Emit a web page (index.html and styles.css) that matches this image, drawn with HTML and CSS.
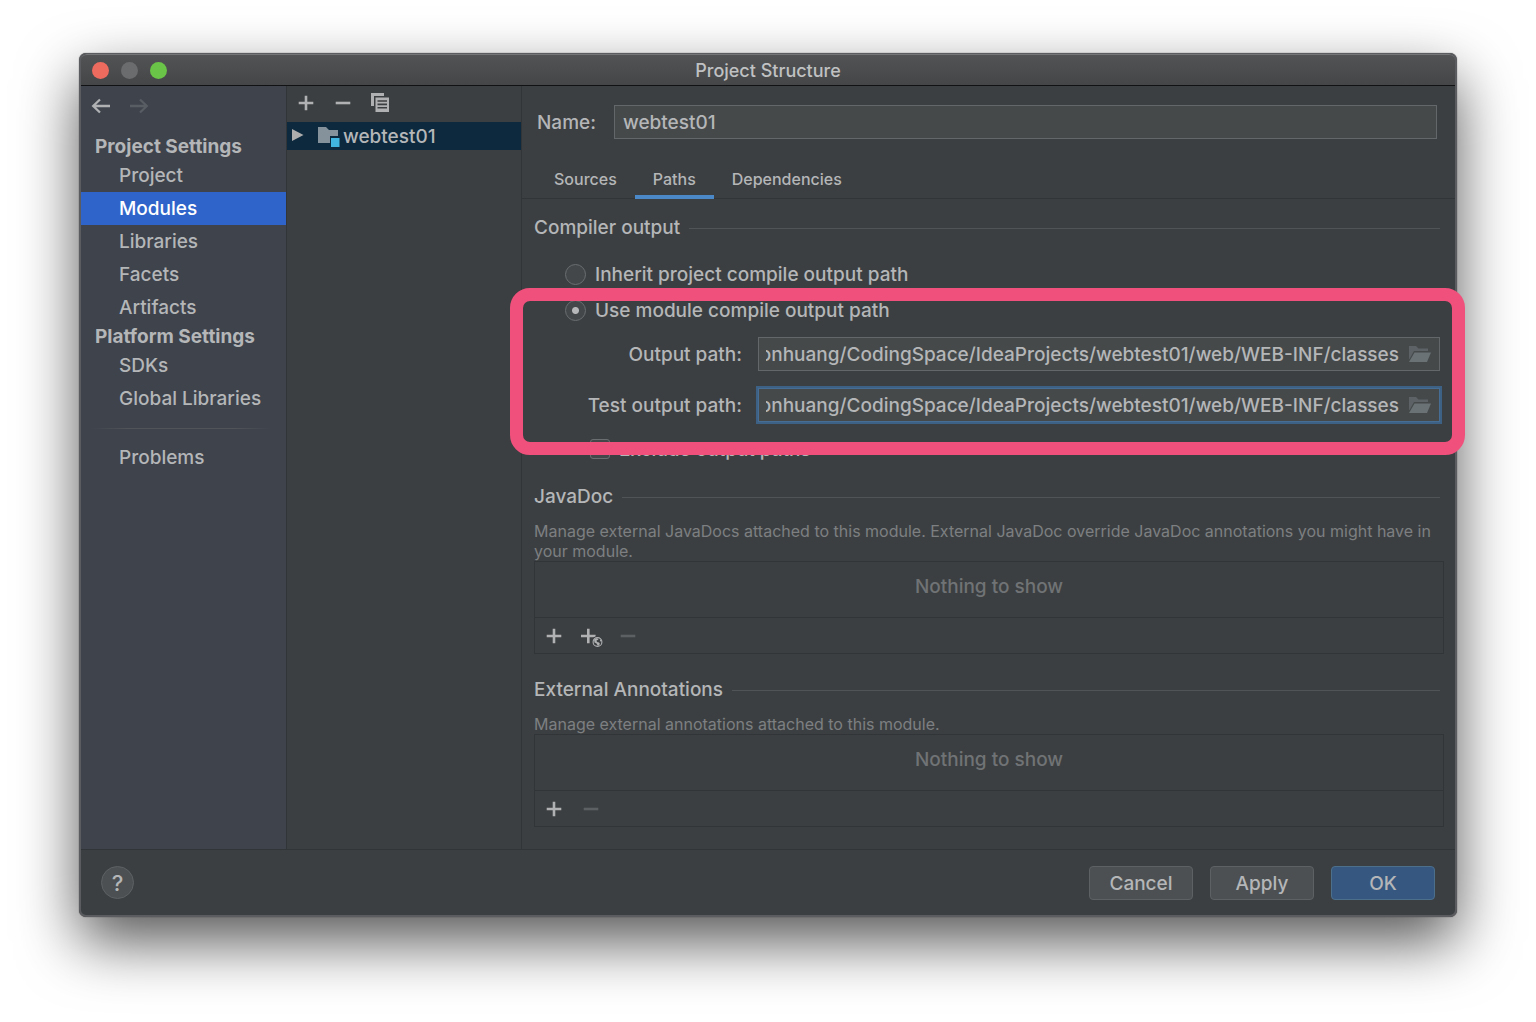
FILE: index.html
```html
<!DOCTYPE html>
<html lang="en">
<head>
<meta charset="utf-8">
<title>Project Structure</title>
<link rel="stylesheet" href="styles.css">
</head>
<body>
<div class="window">
  <header class="titlebar">
    <div class="lights">
      <span class="light light-close"></span>
      <span class="light light-min"></span>
      <span class="light light-zoom"></span>
    </div>
    <h1 class="title">Project Structure</h1>
  </header>

  <div class="body">
    <nav class="sidebar">
      <div class="history">
        <button class="icon-btn" type="button" aria-label="Back">
          <svg width="20" height="16" viewBox="0 0 20 16"><path d="M19 8H2M9 1.5 2.2 8 9 14.500" fill="none" stroke="#afb1b3" stroke-width="2.300"/></svg>
        </button>
        <button class="icon-btn" type="button" aria-label="Forward" disabled>
          <svg width="20" height="16" viewBox="0 0 20 16"><path d="M1 8h17M11 1.500 17.800 8 11 14.500" fill="none" stroke="#585c63" stroke-width="2.300"/></svg>
        </button>
      </div>
      <h2 class="nav-heading">Project Settings</h2>
      <a class="nav-item" href="#project">Project</a>
      <a class="nav-item selected" href="#modules">Modules</a>
      <a class="nav-item" href="#libraries">Libraries</a>
      <a class="nav-item" href="#facets">Facets</a>
      <a class="nav-item" href="#artifacts">Artifacts</a>
      <h2 class="nav-heading">Platform Settings</h2>
      <a class="nav-item" href="#sdks">SDKs</a>
      <a class="nav-item" href="#global">Global Libraries</a>
      <hr class="nav-rule">
      <a class="nav-item" href="#problems">Problems</a>
    </nav>

    <section class="modules">
      <div class="toolbar modules-toolbar">
        <button class="icon-btn" type="button" aria-label="Add">
          <svg width="16" height="16" viewBox="0 0 16 16"><path d="M8 .7v14.600M.7 8h14.600" stroke="#afb1b3" stroke-width="2.600"/></svg>
        </button>
        <button class="icon-btn" type="button" aria-label="Remove">
          <svg width="16" height="16" viewBox="0 0 16 16"><path d="M.7 8h14.600" stroke="#afb1b3" stroke-width="2.600"/></svg>
        </button>
        <button class="icon-btn" type="button" aria-label="Copy">
          <svg width="20" height="20" viewBox="0 0 20 20"><path d="M1 0h13v3H4v10H1z" fill="#afb1b3"/><path fill="#afb1b3" fill-rule="evenodd" d="M5.500 4.500H19V19H5.500zM7.500 7.200v1.600H17V7.200zm0 3.400v1.600H17v-1.600zm0 3.400v1.600H17V14z"/></svg>
        </button>
      </div>
      <a class="tree-row" href="#webtest01">
        <svg width="12" height="14" viewBox="0 0 12 14"><path d="M0 0v12l11.500-6z" fill="#adadad"/></svg>
        <svg class="module-icon" width="24" height="22" viewBox="0 0 24 22"><path d="M1 1h8l3 3h9v13H1z" fill="#85919b"/><path d="M13 10h10v12H13z" fill="#0d293e"/><path d="M14 12h8.500v9H14z" fill="#40b6e0"/></svg>
        <span>webtest01</span>
      </a>
    </section>

    <main class="editor">
      <div class="name-row">
        <label for="name">Name:</label>
        <input class="field name-field" id="name" type="text" value="webtest01">
      </div>
      <div class="tabs">
        <button class="tab" type="button">Sources</button>
        <button class="tab active" type="button">Paths</button>
        <button class="tab" type="button">Dependencies</button>
      </div>

      <div class="panel">
        <h3 class="section-title">Compiler output</h3>
        <label class="choice"><input class="radio" type="radio" name="output"><span>Inherit project compile output path</span></label>
        <div class="custom-output">
          <label class="choice"><input class="radio" type="radio" name="output" checked><span>Use module compile output path</span></label>
          <div class="path-row">
            <label for="out">Output path:</label>
            <div class="field path-field">
              <input class="path-input" id="out" type="text" value="onhuang/CodingSpace/IdeaProjects/webtest01/web/WEB-INF/classes">
              <button class="browse" type="button" aria-label="Browse output path">
                <svg width="22" height="16" viewBox="0 0 22 16"><path d="M0 0h7l2.500 2.500H19V5H5L.5 13H0z" fill="#5c6265"/><path d="M5.500 6.500H22L18 16H0z" fill="#6a7275"/></svg>
              </button>
            </div>
          </div>
          <div class="path-row">
            <label for="test">Test output path:</label>
            <div class="field path-field focused">
              <input class="path-input" id="test" type="text" value="onhuang/CodingSpace/IdeaProjects/webtest01/web/WEB-INF/classes">
              <button class="browse" type="button" aria-label="Browse test output path">
                <svg width="22" height="16" viewBox="0 0 22 16"><path d="M0 0h7l2.500 2.500H19V5H5L.5 13H0z" fill="#5c6265"/><path d="M5.500 6.500H22L18 16H0z" fill="#6a7275"/></svg>
              </button>
            </div>
          </div>
          <label class="choice exclude"><input class="check" type="checkbox"><span>Exclude output paths</span></label>
          <div class="highlight"></div>
        </div>

        <h3 class="section-title">JavaDoc</h3>
        <p class="hint">Manage external JavaDocs attached to this module. External JavaDoc override JavaDoc annotations you might have in your module.</p>
        <div class="list">
          <p class="empty">Nothing to show</p>
          <div class="toolbar list-toolbar">
            <button class="icon-btn" type="button" aria-label="Add JavaDoc">
              <svg width="16" height="16" viewBox="0 0 16 16"><path d="M8 .7v14.600M.7 8h14.600" stroke="#afb1b3" stroke-width="2.600"/></svg>
            </button>
            <button class="icon-btn" type="button" aria-label="Add JavaDoc URL">
              <svg width="24" height="24" viewBox="0 0 24 24"><path d="M9.300 4.700v14.600M2 12h14.600" stroke="#afb1b3" stroke-width="2.600"/><circle cx="18.500" cy="18" r="6" fill="#3c3f41"/><circle cx="18.500" cy="18" r="4.400" fill="none" stroke="#afb1b3" stroke-width="1.100"/><path d="M15 15.500l3-1.500 1.500 1.500-2 1 .5 1.500 2 .5 1 1.500-2 2-1.500-2.500-2-1zM21 15l1.500 2-1.500.5z" fill="#afb1b3"/></svg>
            </button>
            <button class="icon-btn" type="button" aria-label="Remove JavaDoc" disabled>
              <svg width="16" height="16" viewBox="0 0 16 16"><path d="M.7 8h14.600" stroke="#5d6062" stroke-width="2.600"/></svg>
            </button>
          </div>
        </div>

        <h3 class="section-title">External Annotations</h3>
        <p class="hint">Manage external annotations attached to this module.</p>
        <div class="list">
          <p class="empty">Nothing to show</p>
          <div class="toolbar list-toolbar">
            <button class="icon-btn" type="button" aria-label="Add annotations">
              <svg width="16" height="16" viewBox="0 0 16 16"><path d="M8 .7v14.600M.7 8h14.600" stroke="#afb1b3" stroke-width="2.600"/></svg>
            </button>
            <button class="icon-btn" type="button" aria-label="Remove annotations" disabled>
              <svg width="16" height="16" viewBox="0 0 16 16"><path d="M.7 8h14.600" stroke="#5d6062" stroke-width="2.600"/></svg>
            </button>
          </div>
        </div>
      </div>
    </main>
  </div>

  <footer class="footer">
    <button class="help" type="button" aria-label="Help">?</button>
    <div class="actions">
      <button class="btn" type="button">Cancel</button>
      <button class="btn" type="button">Apply</button>
      <button class="btn primary" type="button">OK</button>
    </div>
  </footer>
</div>
</body>
</html>
```
FILE: styles.css
```css
* { box-sizing: border-box; }

body {
  margin: 0;
  padding: 53px 79px 104px;
  background: #fff;
  color: #b4b6b8;
  font: 500 19px/24px Inter, "Liberation Sans", sans-serif;
}

h1, h2, h3, p { margin: 0; font-size: inherit; font-weight: inherit; }
a { color: inherit; text-decoration: none; }
button, input { font: inherit; color: inherit; }
svg { display: block; flex: none; }

.window {
  border: 2px solid #5a5c5f;
  border-top-width: 1px;
  border-radius: 7px;
  background: #3c3f41;
  box-shadow: 0 0 1px rgba(0, 0, 0, .8), 0 25px 60px rgba(0, 0, 0, .66);
}

/* Title bar */
.titlebar {
  display: grid;
  grid-template-columns: 1fr auto 1fr;
  align-items: center;
  height: 32px;
  padding: 0 11px;
  border-top: 1px solid #757678;
  border-bottom: 1px solid #111213;
  border-radius: 6px 6px 0 0;
  background: linear-gradient(#515355, #444648);
}
.lights { display: flex; gap: 12px; }
.light { width: 17px; height: 17px; border-radius: 50%; }
.light-close { background: #ed6a5f; }
.light-min { background: #6b6c6e; }
.light-zoom { background: #6ac447; }
.title { padding-top: 2px; color: #c0c1c2; font-size: 18px; }

.body { display: grid; grid-template-columns: 206px 235px 1fr; }

.icon-btn {
  display: flex;
  align-items: center;
  justify-content: center;
  width: 24px;
  height: 24px;
  padding: 0;
  border: 0;
  background: none;
}

/* Sidebar */
.sidebar { background: #3e434c; border-right: 1px solid #323538; }
.history { display: flex; gap: 14px; padding: 8px 8px 16px; }
.nav-heading { padding-left: 14px; line-height: 25px; font-weight: 700; }
.nav-item { display: block; padding-left: 38px; line-height: 33px; }
.nav-item.selected { background: #2f65ca; color: #fff; }
.nav-rule {
  height: 1px;
  margin: 13px 14px 12px 10px;
  border: 0;
  background: linear-gradient(90deg, transparent, #515459 20%, #515459 80%, transparent);
}

/* Module list */
.modules { border-right: 1px solid #323537; }
.toolbar { display: flex; align-items: center; gap: 13px; }
.modules-toolbar { height: 36px; padding: 0 0 2px 7px; }
.tree-row {
  display: flex;
  align-items: center;
  height: 28px;
  padding-left: 5px;
  background: #0d293e;
}
.tree-row span { padding-top: 2px; }
.module-icon { margin: 2px 2px 0 13px; }

/* Editor */
.editor { min-width: 0; }
.name-row {
  display: grid;
  grid-template-columns: 77px 1fr;
  align-items: center;
  padding: 19px 18px 21px 15px;
}
.name-row label, .path-row label { padding-top: 2px; }
.field {
  height: 34px;
  border: 1px solid #646769;
  border-radius: 0;
  background: #45494a;
  outline: 0;
}
.name-field { width: 100%; padding: 0 8px; }

.tabs { display: flex; padding-left: 14px; border-bottom: 1px solid #323537; }
.tab {
  height: 39px;
  margin-bottom: -1px;
  padding: 2px 18px 0;
  border: 0;
  border-bottom: 4px solid transparent;
  background: none;
  font-size: 16px;
}
.tab.active { border-color: #4a88c7; }

.panel { padding: 17px 11px 22px 12px; }
.section-title {
  display: flex;
  align-items: center;
  gap: 9px;
  margin: 24px 4px 0 0;
}
.section-title:first-child { margin-top: 0; }
.section-title::after { content: ""; flex: 1; height: 1px; background: #515456; }

.choice {
  display: flex;
  align-items: center;
  gap: 9px;
  width: max-content;
  height: 24px;
  margin-left: 31px;
}
.choice span { padding-top: 2px; }
.section-title + .choice { margin-top: 22px; }
.radio, .check {
  appearance: none;
  width: 21px;
  height: 21px;
  margin: 0;
  border: 1px solid #6b6e70;
  background: #43474a;
}
.radio { border-radius: 50%; }
.radio:checked { background: radial-gradient(circle, #b5b7b9 3px, #43474a 4px); }
.check { width: 20px; height: 20px; border-radius: 3px; }

.custom-output { position: relative; margin-top: 12px; }
.path-row {
  display: grid;
  grid-template-columns: 208px 1fr;
  gap: 16px;
  align-items: center;
  margin: 17px 4px 0 0;
}
.choice + .path-row { margin-top: 15px; }
.path-row label { text-align: right; }
.path-field { display: flex; align-items: center; padding: 0 8px 0 7px; }
.path-field.focused { border-color: #466d94; box-shadow: 0 0 0 2px #3d6185; }
/* Long paths keep their tail in view */
.path-input {
  flex: 1;
  min-width: 0;
  height: 30px;
  padding: 0;
  border: 0;
  outline: 0;
  background: none;
  direction: rtl;
}
.browse { margin-left: 10px; padding: 0; border: 0; background: none; }
.exclude { margin: 15px 0 0 56px; }
.highlight {
  position: absolute;
  inset: -10px -21px 6px -24px;
  border: 13px solid #f0507c;
  border-radius: 20px;
  pointer-events: none;
}

.hint { margin-top: 12px; color: #7d7f81; font-size: 16px; line-height: 20px; font-weight: 400; }
.list { border: 1px solid #323537; }
.empty { padding: 13px 0 18px; color: #707375; text-align: center; }
.list-toolbar { height: 36px; padding-left: 7px; border-top: 1px solid #323537; }

/* Footer */
.footer {
  display: flex;
  align-items: center;
  justify-content: space-between;
  height: 66px;
  padding: 0 20px;
  border-top: 1px solid #323537;
}
.help {
  width: 33px;
  height: 33px;
  padding: 0;
  border: 1px solid #5e6163;
  border-radius: 50%;
  background: #4c5052;
  font-size: 22px;
}
.actions { display: flex; gap: 17px; }
.btn {
  width: 104px;
  height: 34px;
  padding: 2px 0 0;
  border: 1px solid #5e6163;
  border-radius: 4px;
  background: #4c5052;
}
.btn.primary { border-color: #4c708c; background: #365880; }
```
